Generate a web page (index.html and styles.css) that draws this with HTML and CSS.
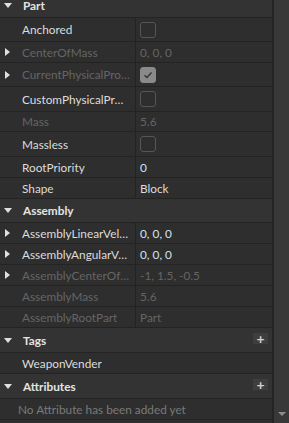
FILE: index.html
```html
<!DOCTYPE html>
<html lang="en">
<head>
    <meta charset="UTF-8">
    <meta name="viewport" content="width=device-width, initial-scale=1.0">
    <title>Properties</title>
    <link rel="stylesheet" href="styles.css">
</head>
<body>
    <div class="window">
        <div class="panel">
            <div class="head first"><span class="arrow-down"></span>Part</div>

            <div class="row r24">
                <div class="name"><span class="label">Anchored</span></div>
                <div class="value"><span class="check"></span></div>
            </div>
            <div class="row">
                <div class="name off"><span class="arrow-right"></span><span class="label">CenterOfMass</span></div>
                <div class="value off">0, 0, 0</div>
            </div>
            <div class="row r24">
                <div class="name off"><span class="arrow-right"></span><span class="label">CurrentPhysicalProperties</span></div>
                <div class="value"><span class="check on">
                    <svg width="10" height="8" viewBox="0 0 10 8"><path d="M1.5 4.2 L4 6.5 L8.5 1.5" fill="none" stroke="#333" stroke-width="1.3"/></svg>
                </span></div>
            </div>
            <div class="row r25">
                <div class="name"><span class="label">CustomPhysicalProperties</span></div>
                <div class="value"><span class="check"></span></div>
            </div>
            <div class="row r20">
                <div class="name off"><span class="label">Mass</span></div>
                <div class="value off">5.6</div>
            </div>
            <div class="row r25">
                <div class="name"><span class="label">Massless</span></div>
                <div class="value"><span class="check"></span></div>
            </div>
            <div class="row">
                <div class="name"><span class="label">RootPriority</span></div>
                <div class="value num">0</div>
            </div>
            <div class="row">
                <div class="name"><span class="label">Shape</span></div>
                <div class="value">Block</div>
            </div>

            <div class="head"><span class="arrow-down"></span>Assembly</div>

            <div class="row">
                <div class="name"><span class="arrow-right"></span><span class="label">AssemblyLinearVelocity</span></div>
                <div class="value num">0, 0, 0</div>
            </div>
            <div class="row">
                <div class="name"><span class="arrow-right"></span><span class="label">AssemblyAngularVelocity</span></div>
                <div class="value num">0, 0, 0</div>
            </div>
            <div class="row">
                <div class="name off"><span class="arrow-right"></span><span class="label">AssemblyCenterOfMass</span></div>
                <div class="value off">-1, 1.5, -0.5</div>
            </div>
            <div class="row">
                <div class="name off"><span class="label">AssemblyMass</span></div>
                <div class="value off">5.6</div>
            </div>
            <div class="row">
                <div class="name off"><span class="label">AssemblyRootPart</span></div>
                <div class="value off">Part</div>
            </div>

            <div class="head r25"><span class="arrow-down"></span>Tags<span class="add">+</span></div>
            <div class="row full">
                <div class="name"><span class="label">WeaponVender</span></div>
            </div>

            <div class="head r25"><span class="arrow-down"></span>Attributes<span class="add">+</span></div>
            <div class="row full">
                <div class="empty">No Attribute has been added yet</div>
            </div>
        </div>
        <div class="scrollbar">
            <span class="scroll-down"></span>
        </div>
    </div>
</body>
</html>
```

FILE: styles.css
```css
html, body {
    margin: 0;
    height: 100%;
    background: #2e2e2e;
    overflow: hidden;
}
body {
    font-family: Lato, "Open Sans", sans-serif;
    font-size: 11.8px;
    color: #dcdcdc;
}
.window {
    display: flex;
    height: 423px;
}
.panel {
    width: 273px;
    border-right: 1px solid #232323;
    overflow: hidden;
    background: #2e2e2e;
}
.head {
    display: flex;
    align-items: center;
    height: 24px;
    box-sizing: border-box;
    border-bottom: 1px solid #232323;
    background: #333333;
    font-weight: bold;
    color: #e4e4e4;
    position: relative;
}
.head.first {
    margin-top: -6px;
}
.row {
    display: flex;
    height: 21px;
    box-sizing: border-box;
    border-bottom: 1px solid #232323;
}
.r24 { height: 24px; }
.r25 { height: 25px; }
.r20 { height: 20px; }
.name {
    width: 136px;
    flex: none;
    box-sizing: border-box;
    padding-left: 22px;
    padding-right: 5px;
    border-right: 1px solid #232323;
    display: flex;
    align-items: center;
    white-space: nowrap;
    overflow: hidden;
    position: relative;
}
.label {
    min-width: 0;
    overflow: hidden;
    text-overflow: ellipsis;
}
.full .name {
    width: auto;
    border-right: none;
}
.value {
    flex: 1;
    padding-left: 4px;
    display: flex;
    align-items: center;
    white-space: nowrap;
}
.off {
    color: #656565;
}
.num {
    color: #d2e2f2;
}
.arrow-down {
    width: 0;
    height: 0;
    border-left: 4px solid transparent;
    border-right: 4px solid transparent;
    border-top: 5px solid #e0e0e0;
    margin: 0 11px 0 4px;
}
.arrow-right {
    position: absolute;
    left: 5px;
    top: 50%;
    margin-top: -4px;
    width: 0;
    height: 0;
    border-top: 4px solid transparent;
    border-bottom: 4px solid transparent;
    border-left: 5px solid #e0e0e0;
}
.check {
    width: 14px;
    height: 14px;
    border: 1px solid #555;
    border-radius: 3px;
    display: flex;
    align-items: center;
    justify-content: center;
}
.check.on {
    background: #8a8a8a;
    border-color: #8a8a8a;
}
.add {
    position: absolute;
    right: 4px;
    top: 5px;
    width: 15px;
    height: 11px;
    background: #3e3e3e;
    color: #d0d0d0;
    font-size: 14px;
    font-weight: bold;
    line-height: 11px;
    text-align: center;
}
.empty {
    padding-left: 18px;
    display: flex;
    align-items: center;
    color: #7a7a7a;
}
.scrollbar {
    width: 15px;
    background: #383838;
    border-left: 1px solid #262626;
    position: relative;
}
.scroll-down {
    position: absolute;
    left: 4px;
    bottom: 7px;
    width: 0;
    height: 0;
    border-left: 4px solid transparent;
    border-right: 4px solid transparent;
    border-top: 4px solid #8c8c8c;
}
```
